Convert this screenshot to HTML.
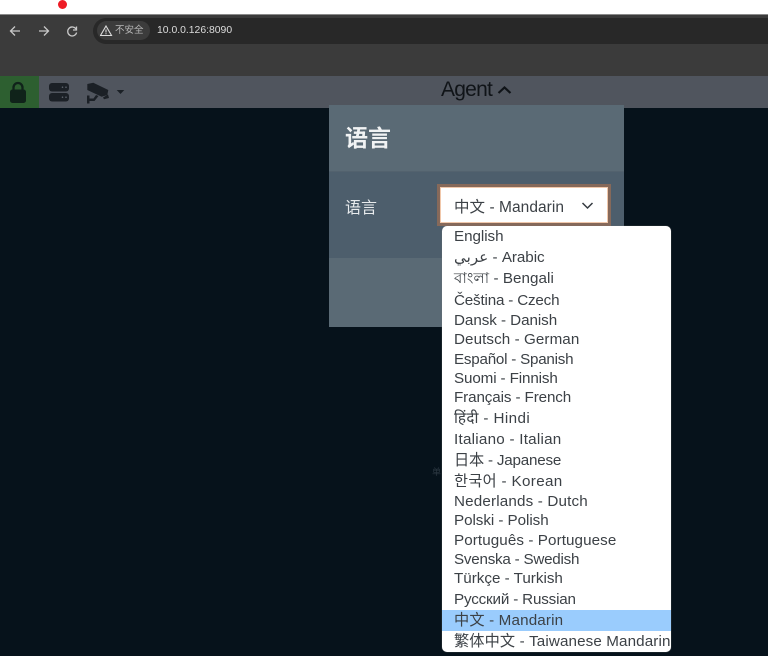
<!DOCTYPE html>
<html><head><meta charset="utf-8">
<style>
html,body{margin:0;padding:0;background:#fff}
body{width:768px;height:656px;overflow:hidden;position:relative;font-family:"Liberation Sans","Noto Sans CJK SC",sans-serif}
.a{position:absolute}
.o{position:absolute;left:12px;white-space:nowrap;font-size:15.2px;line-height:20px;height:20px;color:#3c4146;letter-spacing:-.05px}
</style></head><body>
<div class="a" style="left:58px;top:0;width:9px;height:9px;border-radius:50%;background:#ee1c25"></div>
<div class="a" style="left:0;top:14px;width:768px;height:62px;background:#3b3b3b;border-top:1px solid #8a8a8a;box-sizing:border-box"></div>
<svg class="a" style="left:0;top:15px" width="90" height="30" fill="none" stroke="#c8c8c8" stroke-width="1.3">
<path d="M20 16h-9M15 11.500l-4.500 4.500 4.500 4.500"/><path d="M39 16h9M44 11.500l4.500 4.500-4.500 4.500"/>
<path d="M76 14a4.500 4.500 0 1 0 .6 3.500M76.500 11.500v3.500h-3.500"/></svg>
<div class="a" style="left:93px;top:18px;width:680px;height:26px;border-radius:13px 0 0 13px;background:#282828"></div>
<div class="a" style="left:97px;top:21px;width:53px;height:19px;border-radius:10px;background:#3c3c3c"></div>
<svg class="a" style="left:100px;top:25px" width="13" height="12" fill="none" stroke="#ddd" stroke-width="1.100"><path d="M6 1l5.500 9.500H.5zM6 4.500v3M6 8.300v1"/></svg>
<div class="a" style="left:115px;top:24px;font-size:9.500px;line-height:13px;color:#b8b8b8">不安全</div>
<div class="a" style="left:157px;top:24px;font-size:10.400px;line-height:14px;color:#dcdcdc">10.0.0.126:8090</div>

<div class="a" style="left:0;top:76px;width:768px;height:580px;background:#06121b"></div>
<div class="a" style="left:0;top:76px;width:768px;height:32px;background:#50555e"></div>
<div class="a" style="left:0;top:76px;width:38.500px;height:32px;background:#2d5f30"></div>
<svg class="a" style="left:9px;top:81px" width="19" height="23"><path d="M4.500 9V6.500a4.500 4.500 0 0 1 9 0V9" fill="none" stroke="#10231a" stroke-width="2.300"/><rect x="1" y="8.500" width="16" height="13.500" rx="2.500" fill="#10231a"/></svg>
<svg class="a" style="left:48px;top:83px" width="22" height="20" fill="#1b2026"><rect x="1" y="0" width="20" height="8.500" rx="3"/><rect x="1" y="10" width="20" height="8.500" rx="3"/><g fill="#5c616a"><circle cx="14.500" cy="4.200" r=".8"/><circle cx="18" cy="4.200" r=".8"/><circle cx="14.500" cy="14.200" r=".8"/><circle cx="18" cy="14.200" r=".8"/></g></svg>
<svg class="a" style="left:85px;top:82px" width="42" height="22" fill="#1b2026"><path d="M2.300 2L8.300 .7 23.300 8 22.300 13 16.700 14.700 2.300 8z"/><path d="M18 15.500l5-3 1 3.500-5 1.200z"/><path d="M2 13.500h2.500v3h4l2.500-3.500 2.500 1-4 5H4.500v2.500H2z"/><path d="M31.700 8h7.600l-3.800 4z"/></svg>
<div class="a" style="left:441px;top:77px;font-size:21px;line-height:26px;color:#101418;letter-spacing:-.75px">Agent</div>
<svg class="a" style="left:497px;top:85px" width="15" height="11" fill="none" stroke="#101418" stroke-width="2.200"><path d="M1.500 8l6-5.500 6 5.500"/></svg>

<div class="a" style="left:329px;top:105px;width:295px;height:222px;background:#5a6a75"></div>
<div class="a" style="left:329px;top:171px;width:295px;height:87px;background:#4d5e6c;border-top:1px solid #53626e;box-sizing:border-box"></div>
<div class="a" style="left:345px;top:123px;font-size:23px;line-height:30px;font-weight:700;color:#f1f3f4">语言</div>
<div class="a" style="left:345px;top:199px;font-size:16px;line-height:20px;color:#e8ebed">语言</div>

<div class="a" style="left:437px;top:184px;width:174px;height:42px;background:#fff;border:3px solid #86695a;box-sizing:border-box"><div style="height:100%;border:1px solid #f1c8ab;box-sizing:border-box"></div></div>
<div class="a" style="left:454px;top:198px;font-size:15.500px;line-height:20px;color:#3c4146;white-space:nowrap;letter-spacing:.05px">中文 - Mandarin</div>
<svg class="a" style="left:581px;top:201px" width="13" height="10" fill="none" stroke="#343a40" stroke-width="1.500"><path d="M1.500 2l5 5 5-5"/></svg>

<div class="a" style="left:432px;top:466px;width:10px;height:13px;font-size:9px;line-height:13px;color:#2c3842">单</div>

<div class="a" style="left:442px;top:226px;width:229px;height:426px;background:#fff;border-radius:5px;overflow:hidden;box-shadow:0 0 1px #777">
<div class="a" style="left:0;top:384px;width:229px;height:21px;background:#9accfd"></div>
<div class="o" style="top:1px">English</div>
<div class="o" style="top:22px">عربي - Arabic</div>
<div class="o" style="top:43px;letter-spacing:.05px">বাংলা - Bengali</div>
<div class="o" style="top:65px;letter-spacing:-.18px">Čeština - Czech</div>
<div class="o" style="top:85px">Dansk - Danish</div>
<div class="o" style="top:104px;letter-spacing:.08px">Deutsch - German</div>
<div class="o" style="top:124px;letter-spacing:-.23px">Español - Spanish</div>
<div class="o" style="top:143px;letter-spacing:-.12px">Suomi - Finnish</div>
<div class="o" style="top:162px;letter-spacing:-.11px">Français - French</div>
<div class="o" style="top:183px;letter-spacing:.4px">हिंदी - Hindi</div>
<div class="o" style="top:204px;letter-spacing:.25px">Italiano - Italian</div>
<div class="o" style="top:225px;letter-spacing:-.2px">日本 - Japanese</div>
<div class="o" style="top:246px;letter-spacing:.35px">한국어 - Korean</div>
<div class="o" style="top:266px;letter-spacing:.17px">Nederlands - Dutch</div>
<div class="o" style="top:285px">Polski - Polish</div>
<div class="o" style="top:305px;letter-spacing:.09px">Português - Portuguese</div>
<div class="o" style="top:324px;letter-spacing:-.23px">Svenska - Swedish</div>
<div class="o" style="top:343px;letter-spacing:0">Türkçe - Turkish</div>
<div class="o" style="top:364px;letter-spacing:-.17px">Русский - Russian</div>
<div class="o" style="top:385px;letter-spacing:.16px">中文 - Mandarin</div>
<div class="o" style="top:406px;letter-spacing:.12px">繁体中文 - Taiwanese Mandarin</div>
</div>
</body></html>
